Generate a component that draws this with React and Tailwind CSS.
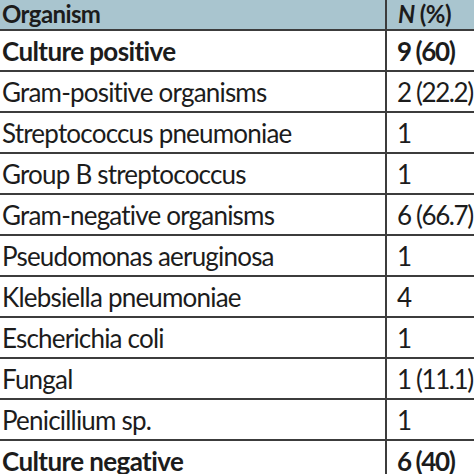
import React from "react";

const rows = [
  { name: "Culture positive", n: "9 (60)", bold: true },
  { name: "Gram-positive organisms", n: "2 (22.2)" },
  { name: "Streptococcus pneumoniae", n: "1" },
  { name: "Group B streptococcus", n: "1" },
  { name: "Gram-negative organisms", n: "6 (66.7)" },
  { name: "Pseudomonas aeruginosa", n: "1" },
  { name: "Klebsiella pneumoniae", n: "4" },
  { name: "Escherichia coli", n: "1" },
  { name: "Fungal", n: "1 (11.1)" },
  { name: "Penicillium sp.", n: "1" },
  { name: "Culture negative", n: "6 (40)", bold: true },
];

export default function App() {
  return (
    <div
      className="w-[474px] h-[474px] overflow-hidden bg-white text-[#1c1c1c]"
      style={{ fontFamily: "Lato, 'Noto Sans', sans-serif" }}
    >
      <div className="grid grid-cols-[387px_1fr] h-[31px] bg-[#a9c5cf] border-b-2 border-[#3c3c3c] font-bold text-[24px] tracking-[-0.6px] leading-none">
        <div className="border-r-2 border-[#3c3c3c] pl-[2px] pb-[1px] flex items-center whitespace-nowrap">Organism</div>
        <div className="pl-[11px] pb-[1px] flex items-center whitespace-nowrap">
          <span className="italic">N</span>&nbsp;(%)
        </div>
      </div>
      {rows.map((r, i) => (
        <div
          key={i}
          className={`grid grid-cols-[387px_1fr] h-[41px] border-b-2 border-[#3c3c3c] text-[26px] leading-none ${r.bold ? "font-bold tracking-[-0.6px]" : "tracking-[-0.8px]"}`}
        >
          <div className="border-r-2 border-[#3c3c3c] pl-[2px] pt-[1px] flex items-center whitespace-nowrap">{r.name}</div>
          <div className="pl-[10px] pt-[1px] flex items-center whitespace-nowrap tracking-[-1.4px]">{r.n}</div>
        </div>
      ))}
    </div>
  );
}
